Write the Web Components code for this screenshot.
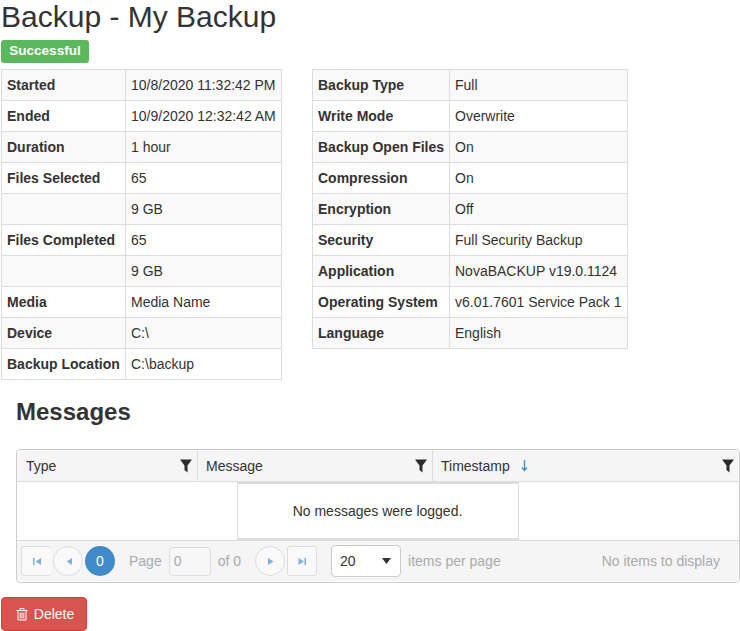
<!DOCTYPE html>
<html><head><meta charset="utf-8"><title>Backup</title>
<style>
html,body{margin:0;padding:0;background:#fff}
body{font:14px/20px "Liberation Sans",Arial,sans-serif;color:#333;height:631px;overflow:hidden}
backup-page{display:block}
</style></head><body>
<backup-page></backup-page>
<script>
function def(name,html){
  customElements.define(name,class extends HTMLElement{
    connectedCallback(){
      if(this.shadowRoot)return;
      const r=this.attachShadow({mode:'open'});
      r.innerHTML=typeof html==='function'?html(this):html;
    }
  });
}
def('status-badge',`<style>:host{display:block;width:88px;height:23px;box-sizing:border-box;background:#5cb85c;border-radius:3px;color:#fff;font-weight:bold;font-size:13.5px;line-height:21px;text-align:center}</style><slot></slot>`);
def('info-table',h=>{
  const w=h.getAttribute('widths').split(',');
  const rows=JSON.parse(h.getAttribute('rows'));
  return `<style>
  :host{display:block;flex:none}
  table{border-collapse:collapse;table-layout:fixed;width:${+w[0]+ +w[1]}px}
  td{border:1px solid #ddd;padding:5px;line-height:20px;font-size:14px;white-space:nowrap;overflow:hidden;height:20px}
  td:first-child{font-weight:bold}
  tr:nth-child(odd) td{background:#f9f9f9}
  </style><table><colgroup><col style="width:${w[0]}px"><col style="width:${w[1]}px"></colgroup>${rows.map(r=>`<tr><td>${r[0]}</td><td>${r[1]}</td></tr>`).join('')}</table>`;
});
const funnel=`<svg width="12" height="14" viewBox="0 0 12 14"><path d="M0 .5h12L7.500 6.500V13.500L4.500 11V6.500z" fill="#2b2b2b"/></svg>`;
def('grid-head',h=>`<style>:host{display:flex;align-items:center;box-sizing:border-box;padding:0 5px 0 var(--pl,8px);width:var(--w);height:31px;border-left:var(--bl,0) solid #ddd;color:#333}
 span{flex:1;display:flex;align-items:center;gap:8px} svg{display:block;flex:none}</style><span><slot></slot>${h.hasAttribute('sorted')?`<svg width="9" height="13" viewBox="0 0 9 13" style="margin-left:2px"><path d="M4.500 1v10M2 8.500l2.500 3 2.500-3" fill="none" stroke="#428bca" stroke-width="1.3"/></svg>`:''}</span>${funnel}`);
const arrow=d=>({first:`<path d="M3 3h1.500v7H3zM11 3v7L5.500 6.500z"/>`,prev:`<path d="M10 3v7L4.500 6.500z"/>`,next:`<path d="M4 3v7l5.500-3.500z"/>`,last:`<path d="M2.500 3v7L8 6.500zM8.500 3H10v7H8.500z"/>`})[d];
def('pager-btn',h=>{const k=h.getAttribute('kind');const round=k==='prev'||k==='next';return `<style>:host{display:flex;align-items:center;justify-content:center;box-sizing:border-box;width:30px;height:30px;border:1px solid #ddd;background:#f9f9f9;border-radius:${round?'50%':'3px'};flex:none}</style><svg width="13" height="13" viewBox="0 0 13 13" fill="#7fb0dc">${arrow(k)}</svg>`});
def('page-size',`<style>:host{display:flex;align-items:center;justify-content:space-between;box-sizing:border-box;width:70px;height:32px;border:1px solid #ccc;border-radius:4px;background:#fff;padding:0 9px 0 8px;color:#333;flex:none}
svg{display:block}</style><slot></slot><svg width="9" height="6" viewBox="0 0 9 6"><path d="M0 0h9L4.500 6z" fill="#333"/></svg>`);
def('grid-pager',`<style>:host{display:flex;align-items:center;box-sizing:border-box;height:41px;padding:0 19px 0 4px;background:#f5f5f5;border-top:1px solid #ddd;color:#aaa}
 .cur{width:30px;height:30px;border-radius:50%;background:#428bca;color:#fff;display:flex;align-items:center;justify-content:center;margin:0 14px 0 2px;flex:none}
 .inp{width:42px;height:29px;box-sizing:border-box;border:1px solid #ddd;border-radius:4px;padding-left:4px;line-height:27px;margin:0 7px 0 7px;flex:none;background:#f7f7f7;color:#aaa}
 .end{margin-left:auto}
 </style>
 <pager-btn kind="first" style="border-right-width:0"></pager-btn><pager-btn kind="prev" style="margin-left:2px"></pager-btn><div class="cur">0</div>
 <span>Page</span><div class="inp">0</div><span>of 0</span>
 <pager-btn kind="next" style="margin-left:14px"></pager-btn><pager-btn kind="last" style="margin-left:2px"></pager-btn>
 <page-size style="margin:0 7px 0 14px">20</page-size><span>items per page</span><span class="end">No items to display</span>`);
def('messages-grid',`<style>:host{display:block;box-sizing:border-box;width:724px;height:134px;margin-left:16px;border:1px solid #ccc;border-radius:4px;overflow:hidden;background:#fff}
 .head{display:flex;background:#f5f5f5;border-bottom:1px solid #ddd;height:32px;box-sizing:border-box}
 .body{height:59px;display:flex;justify-content:center;box-sizing:border-box;margin-bottom:-1px}
 .empty{width:282px;margin-left:-1px;box-sizing:border-box;height:58px;border:1px solid #ddd;border-width:2px 1px 2px 1px;display:flex;align-items:center;justify-content:center;color:#333}
 </style>
 <div class="head"><grid-head style="--w:180px;--pl:9px">Type</grid-head><grid-head style="--w:235px;--bl:1px">Message</grid-head><grid-head style="--w:307px;--bl:1px" sorted>Timestamp</grid-head></div>
 <div class="body"><div class="empty"><slot></slot></div></div>
 <grid-pager></grid-pager>`);
def('danger-button',`<style>:host{display:flex;align-items:center;justify-content:center;gap:6px;box-sizing:border-box;width:86px;height:34px;background:#d9534f;border:1px solid #d43f3a;border-radius:4px;color:#fff;font-size:14px;padding-left:2px}svg{display:block}</style>
 <svg width="12" height="14" viewBox="0 0 12 14" fill="none" stroke="#fff" stroke-width="1"><path d="M.500 3.500h11M4 3.500V1.500h4v2M2 3.500v9.500h8V3.500M4.200 5.500v6M6 5.500v6M7.800 5.500v6"/></svg><slot></slot>`);
const L=[["Started","10/8/2020 11:32:42 PM"],["Ended","10/9/2020 12:32:42 AM"],["Duration","1 hour"],["Files Selected","65"],["","9 GB"],["Files Completed","65"],["","9 GB"],["Media","Media Name"],["Device","C:\\"],["Backup Location","C:\\backup"]];
const R=[["Backup Type","Full"],["Write Mode","Overwrite"],["Backup Open Files","On"],["Compression","On"],["Encryption","Off"],["Security","Full Security Backup"],["Application","NovaBACKUP v19.0.1124"],["Operating System","v6.01.7601 Service Pack 1"],["Language","English"]];
const esc=o=>JSON.stringify(o).replace(/&/g,'&amp;').replace(/'/g,'&#39;');
def('backup-page',`<style>:host{display:block;padding-left:1px}
 h1{margin:0;font-size:30px;font-weight:normal;line-height:33px;height:40px;color:#333}
 .tables{display:flex;align-items:flex-start;gap:30px;margin-top:6px}
 h3{margin:19px 0 0 15px;font-size:24px;line-height:26px;font-weight:bold;color:#333;height:50px}
 messages-grid{margin-left:15px}
 danger-button{margin-top:14px}
 </style>
 <h1>Backup - My Backup</h1>
 <status-badge>Successful</status-badge>
 <div class="tables"><info-table widths="124,156" rows='${esc(L)}'></info-table><info-table widths="137,178" rows='${esc(R)}'></info-table></div>
 <h3>Messages</h3>
 <messages-grid>No messages were logged.</messages-grid>
 <danger-button>Delete</danger-button>`);
</script>
</body></html>
